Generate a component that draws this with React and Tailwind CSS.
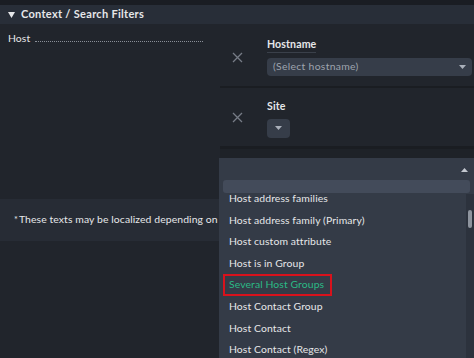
import React from "react";

const items = [
  "Host address families",
  "Host address family (Primary)",
  "Host custom attribute",
  "Host is in Group",
  "Several Host Groups",
  "Host Contact Group",
  "Host Contact",
  "Host Contact (Regex)",
];

function XIcon() {
  return (
    <svg width="11" height="11" viewBox="0 0 11 11">
      <path d="M1 1 L10 10 M10 1 L1 10" stroke="#767c86" strokeWidth="1.3" fill="none" />
    </svg>
  );
}

function Down({ color = "#aab0ba" }) {
  return (
    <svg width="7" height="4" viewBox="0 0 7 4">
      <path d="M0 0 L7 0 L3.5 4 Z" fill={color} />
    </svg>
  );
}

export default function App() {
  return (
    <div
      className="relative w-[474px] h-[358px] overflow-hidden bg-[#21252c] text-[#e6e7e9] text-[10.4px] tracking-[0.1px]"
      style={{ fontFamily: "Lato, 'Open Sans', sans-serif" }}
    >
      <div className="h-[5px] bg-[#1a1d23]" />
      <div className="h-[19px] bg-[#282e38] flex items-center pl-[8px] gap-[6px]">
        <svg width="7" height="6" viewBox="0 0 7 6">
          <path d="M0 0 L7 0 L3.5 6 Z" fill="#e6e7e9" />
        </svg>
        <span className="font-bold text-[11px] tracking-[0.3px]">Context / Search Filters</span>
      </div>
      <div className="flex">
        <div className="w-[220px] shrink-0 pl-[8px] pr-[17px] pt-[7px] h-[21px] flex items-end">
          <span className="leading-[14px]">Host</span>
          <span className="flex-1 ml-[5px] mb-[3px] border-b border-dotted border-[#8a8f98]" />
        </div>
        <div className="flex-1 flex flex-col">
          <div className="h-[62px] flex items-center">
            <div className="w-[47px] flex justify-start pl-[12px] pt-[4px]">
              <XIcon />
            </div>
            <div className="flex-1 pr-[2px] pt-[2px] flex flex-col">
              <div className="self-start font-bold text-[10.6px] leading-[14px] pb-[1px] border-b border-[#3a404a]">Hostname</div>
              <div className="mt-[5px] h-[18px] rounded-[4px] bg-[#363d49] flex items-center justify-between pl-[6px] pr-[6px]">
                <span className="text-[#9ea4ae] tracking-[0.3px]">(Select hostname)</span>
                <Down />
              </div>
            </div>
          </div>
          <div className="h-[2px] bg-[#1a1d22]" />
          <div className="h-[58px] flex items-center">
            <div className="w-[47px] flex justify-start pl-[12px]">
              <XIcon />
            </div>
            <div className="flex-1 pt-[2px] flex flex-col">
              <div className="self-start font-bold text-[10.6px] leading-[14px] pb-[1px]">Site</div>
              <div className="mt-[5px] w-[23px] h-[19px] rounded-[4px] bg-[#363d49] flex items-center justify-center">
                <Down />
              </div>
            </div>
          </div>
          <div className="h-[3px] bg-[#1a1d22]" />
          <div className="h-[9px] bg-[#1e2228]" />
        </div>
      </div>
      <div className="mt-[41px] h-[42px] bg-[#272c35] flex items-center pl-[14px] whitespace-nowrap">
        <span className="text-[9px] self-start mt-[14px] mr-[1px]">*</span>
        <span>These texts may be localized depending on the language of the user.</span>
      </div>

      <div className="absolute left-[219px] top-[158px] right-0 bottom-0 bg-[#343b47] flex flex-col">
        <div className="h-[22px] flex items-center justify-end pr-[6px] pt-[2px]">
          <svg width="7" height="4" viewBox="0 0 7 4">
            <path d="M0 4 L7 4 L3.5 0 Z" fill="#c4c8d0" />
          </svg>
        </div>
        <div className="mx-[4px] h-[13px] rounded-[3px] bg-[#434b5a]" />
        <div className="flex-1 flex mt-[1px] overflow-hidden">
          <div className="flex-1 overflow-hidden">
            <div className="-mt-[6px]">
              {items.map((t) =>
                t === "Several Host Groups" ? (
                  <div key={t} className="h-[21.6px] flex items-center">
                    <div className="ml-[4px] h-[22px] w-[109px] border-2 border-[#d8121c] flex items-center pl-[4px] whitespace-nowrap">
                      <span className="text-[#2bba86]">{t}</span>
                    </div>
                  </div>
                ) : (
                  <div key={t} className="h-[21.6px] flex items-center pl-[10px] whitespace-nowrap">
                    {t}
                  </div>
                )
              )}
            </div>
          </div>
          <div className="w-[8px] bg-[#2c323d] pt-[16px] flex justify-center">
            <div className="w-[4px] h-[18px] rounded-[2px] bg-[#8e949e]" />
          </div>
        </div>
      </div>
    </div>
  );
}
